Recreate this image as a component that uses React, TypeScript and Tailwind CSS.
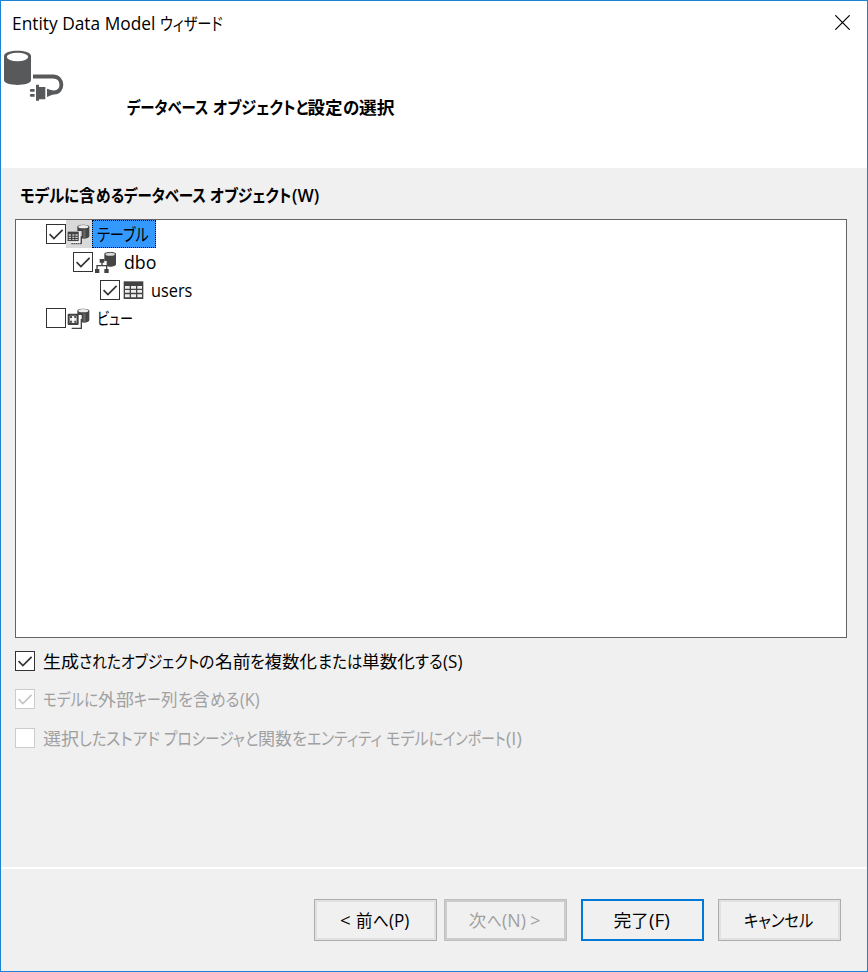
import { useLayoutEffect, useRef, useState } from 'react'
import type { ReactNode } from 'react'

type Run = [text: string, width: number]

// Squeezes one run of text into its advance width, like a condensed UI font
function FitRun({ text, width }: { text: string; width: number }) {
  const ref = useRef<HTMLSpanElement>(null)
  const [scale, setScale] = useState(1)

  useLayoutEffect(() => {
    if (ref.current) setScale(width / ref.current.offsetWidth)
  }, [text, width])

  return (
    <span className="inline-block whitespace-pre" style={{ width }}>
      <span
        ref={ref}
        className="inline-block origin-left whitespace-pre"
        style={{ transform: `scaleX(${scale})` }}
      >
        {text}
      </span>
    </span>
  )
}

function Label({ runs, className = '' }: { runs: Run[]; className?: string }) {
  return (
    <span className={`flex whitespace-pre leading-6 ${className}`}>
      {runs.map(([text, width], i) => (
        <FitRun key={i} text={text} width={width} />
      ))}
    </span>
  )
}

interface CheckboxProps {
  checked?: boolean
  disabled?: boolean
}

function Checkbox({ checked, disabled }: CheckboxProps) {
  return (
    <span
      role="checkbox"
      aria-checked={!!checked}
      className={`block w-5 h-5 shrink-0 border bg-white ${
        disabled ? 'border-[#cccccc] text-[#c4c4c4]' : 'border-[#333333] text-[#333333]'
      }`}
    >
      {checked && (
        <svg viewBox="0 0 18 18" className="block w-[18px] h-[18px]">
          <path d="M2.6 9.2 L6.9 13.5 L15.6 4.8" fill="none" stroke="currentColor" strokeWidth="1.7" />
        </svg>
      )}
    </span>
  )
}

function DatabasePlugIcon() {
  return (
    <svg viewBox="0 0 64 54" className="block w-16 h-[54px]">
      <g fill="#58595b">
        <path d="M3 6 C3 -1 30 -1 30 6 V30 C30 36.5 3 36.5 3 30 Z" />
        <path d="M35 34.7 h3 v16 h-3 z M37.500 37 h6.800 v12.3 h-6.800 z M46 38.7 L53 41 V44 L46 47 Z" />
        <path d="M33.6 39 h-3.400 a1.4 1.4 0 0 0 0 2.8 h3.400 z M33.6 44 h-3.400 a1.4 1.4 0 0 0 0 2.8 h3.400 z" />
      </g>
      <ellipse cx="16.5" cy="7" rx="10.7" ry="4.2" fill="#fff" />
      <path d="M32 26.500 H52 C63 26.500 63 42.5 53 42.5 H49" fill="none" stroke="#58595b" strokeWidth="3.8" />
    </svg>
  )
}

function SmallCylinder({ x, y }: { x: number; y: number }) {
  return (
    <g transform={`translate(${x} ${y})`}>
      <path d="M1 7 C1 -1 37 -1 37 7 V36 C36 43 20 45 14 42 V20 H1 Z" fill="#454545" />
      <path d="M22 16 V41" stroke="#666" strokeWidth="7" />
      <ellipse cx="19" cy="7" rx="15" ry="5" fill="#ededed" />
    </g>
  )
}

function TablesIcon() {
  return (
    <svg viewBox="108 15 78 84" className="block w-[26px] h-7">
      <SmallCylinder x={141} y={28} />
      <path d="M113 50 h33 v28 h-33 z" fill="#424242" />
      <path
        d="M116 58 h7 v4 h-7z M127 58 h6 v4 h-6z M136 58 h7 v4 h-7z M116 65 h7 v4 h-7z M127 65 h6 v4 h-6z M136 65 h7 v4 h-7z M116 72 h7 v3 h-7z M127 72 h6 v3 h-6z M136 72 h7 v3 h-7z"
        fill="#ccc"
      />
      <path d="M149 52 V82 H122" fill="none" stroke="#f4f4f4" strokeWidth="4" />
      <path d="M124 86 H154" fill="none" stroke="#555" strokeWidth="4" strokeDasharray="5 1.500" />
      <path d="M154 64 V86" fill="none" stroke="#424242" strokeWidth="4" />
    </svg>
  )
}

function SchemaIcon() {
  return (
    <svg viewBox="189 99 78 84" className="block w-[26px] h-7">
      <path d="M223 117 C223 109 258 109 258 117 V148 C258 156 236 157 230 153 V138 H223 Z" fill="#454545" />
      <ellipse cx="240.500" cy="118" rx="14" ry="4.6" fill="#dadada" />
      <path d="M209 132 h14 v11 h-14 z M195 162 h13 v12 h-13 z M223 162 h13 v12 h-13 z" fill="#424242" />
      <path d="M216 140 V152 M201 164 V152 H230 V164" fill="none" stroke="#424242" strokeWidth="4" />
    </svg>
  )
}

function TableIcon() {
  return (
    <svg viewBox="270 183 78 84" className="block w-[26px] h-7">
      <path d="M281 199 h59 v53 h-59 z" fill="#424242" />
      <path
        d="M285 213 h14 v8 h-14z M303 213 h15 v8 h-15z M322 213 h14 v8 h-14z M285 225 h14 v8 h-14z M303 225 h15 v8 h-15z M322 225 h14 v8 h-14z M285 238 h14 v9 h-14z M303 238 h15 v9 h-15z M322 238 h14 v9 h-14z"
        fill="#eee"
      />
    </svg>
  )
}

function ViewsIcon() {
  return (
    <svg viewBox="108 267 78 84" className="block w-[26px] h-7">
      <SmallCylinder x={141} y={280} />
      <path d="M149 300 V335 H122" fill="none" stroke="#fff" strokeWidth="4" />
      <path d="M125 340 H154 V312" fill="none" stroke="#424242" strokeWidth="4" />
      <rect x="113" y="296" width="33" height="34" rx="3" fill="#424242" />
      <rect x="119" y="302" width="21" height="22" rx="2" fill="#e8e8e8" />
      <path d="M120 303 h6 v6 h-6 z M133 303 h6 v6 h-6 z M120 317 h6 v6 h-6 z M133 317 h6 v6 h-6 z" fill="#4c4c4c" />
      <path d="M126 309 h7 v8 h-7 z" fill="#fff" />
    </svg>
  )
}

interface TreeRowProps {
  indent: string
  icon: ReactNode
  runs: Run[]
  checked?: boolean
  selected?: boolean
}

function TreeRow({ indent, icon, runs, checked, selected }: TreeRowProps) {
  return (
    <div className={`flex items-center h-7 ${indent}`}>
      <Checkbox checked={checked} />
      <span className={selected ? 'bg-[#d9d9d9]' : ''}>{icon}</span>
      <span
        className={`flex items-center h-7 ${
          selected ? 'w-16 bg-[#3399ff] border border-dotted border-black px-1' : 'px-[5px]'
        }`}
      >
        <Label runs={runs} className="pb-px" />
      </span>
    </div>
  )
}

interface OptionProps extends CheckboxProps {
  runs: Run[]
  className?: string
}

function Option({ runs, checked, disabled, className = '' }: OptionProps) {
  return (
    <div className={`flex items-center h-6 ${className}`}>
      <Checkbox checked={checked} disabled={disabled} />
      <Label runs={runs} className={`ml-2 pb-px ${disabled ? 'text-[#a0a0a0]' : ''}`} />
    </div>
  )
}

function Button({ runs, className, disabled }: { runs: Run[]; className: string; disabled?: boolean }) {
  return (
    <button
      disabled={disabled}
      className={`flex items-center justify-center w-[123px] h-[42px] pr-0.5 bg-[#f0f0f0] ${className}`}
    >
      <Label runs={runs} />
    </button>
  )
}

export default function App() {
  return (
    <div className="flex flex-col w-[868px] h-[972px] border border-[#1883d7] bg-[#f0f0f0] text-black text-[17.5px] font-['Open_Sans','Noto_Sans_CJK_JP',sans-serif] [font-feature-settings:'palt'] overflow-hidden">
      {/* Title bar and banner */}
      <header className="h-[167px] shrink-0 bg-white">
        <div className="flex justify-between pt-2.5 pl-[11px] pr-[17px]">
          <Label runs={[['Entity Data Model ', 147.5], ['ウィザード', 62.5]]} />
          <svg viewBox="0 0 15 15" className="w-[15px] h-[15px] mt-1">
            <path d="M0.300 0.300 L14.700 14.700 M14.700 0.300 L0.300 14.700" stroke="#000" strokeWidth="1.2" />
          </svg>
        </div>
        <div className="flex pt-[15px]">
          <DatabasePlugIcon />
          <Label
            className="ml-[62px] mt-[45px] font-semibold"
            runs={[['データベース ', 85.5], ['オブジェクトと', 95], ['設定', 35], ['の', 16], ['選択', 35.5]]}
          />
        </div>
      </header>

      {/* Object tree */}
      <main className="flex-1 pl-3.5 pr-5">
        <Label
          className="mt-[15px] ml-[5px] font-semibold"
          runs={[['モデルに', 59], ['含', 16.5], ['める', 28.5], ['データベース ', 86], ['オブジェクト', 81.5], ['(W)', 27.5]]}
        />
        <div className="mt-3 h-[419px] border border-[#646464] bg-white">
          <TreeRow indent="pl-[30px]" icon={<TablesIcon />} runs={[['テーブル', 52]]} checked selected />
          <TreeRow indent="pl-[57px]" icon={<SchemaIcon />} runs={[['dbo', 32.5]]} checked />
          <TreeRow indent="pl-[84px]" icon={<TableIcon />} runs={[['users', 41]]} checked />
          <TreeRow indent="pl-[30px]" icon={<ViewsIcon />} runs={[['ビュー', 36]]} />
        </div>
        <div className="mt-[11px]">
          <Option
            checked
            runs={[['生成', 36], ['された', 42], ['オブジェクト', 78], ['の', 15.5], ['名前', 35.5], ['を', 14.5], ['複数化', 53], ['または', 44], ['単数化', 53.5], ['する', 28], ['(S)', 19.5]]}
          />
          <Option
            className="mt-3.5"
            checked
            disabled
            runs={[['モデルに', 55], ['外部', 36], ['キー', 27], ['列', 17], ['を', 15], ['含', 17], ['める', 29.5], ['(K)', 19.5]]}
          />
          <Option
            className="mt-[15px]"
            disabled
            runs={[['選択', 36], ['した', 27], ['ストアド ', 58], ['プロシージャ', 81], ['と', 13], ['関数', 34], ['を', 15], ['エンティティ ', 79], ['モデルに', 57], ['インポート', 63], ['(I)', 15.5]]}
          />
        </div>
      </main>

      {/* Wizard buttons */}
      <footer className="flex justify-end h-[104px] shrink-0 pt-[30px] pr-[26px] border-t-2 border-white">
        <Button
          className="border border-[#adadad] shadow-[inset_0_0_0_2px_#e1e1e1]"
          runs={[['< ', 16], ['前', 17], ['へ', 16], ['(P)', 20.5]]}
        />
        <Button
          disabled
          className="ml-[7px] border border-[#bfbfbf] text-[#a0a0a0] shadow-[inset_0_0_0_2px_#cccccc]"
          runs={[['次', 18], ['へ', 15], ['(N) ', 28.5], ['>', 10.5]]}
        />
        <Button
          className="ml-3.5 border-2 border-[#0078d7]"
          runs={[['完了', 35], ['(F)', 20.5]]}
        />
        <Button
          className="ml-3.5 border border-[#adadad] shadow-[inset_0_0_0_2px_#e1e1e1]"
          runs={[['キャンセル', 69]]}
        />
      </footer>
    </div>
  )
}
